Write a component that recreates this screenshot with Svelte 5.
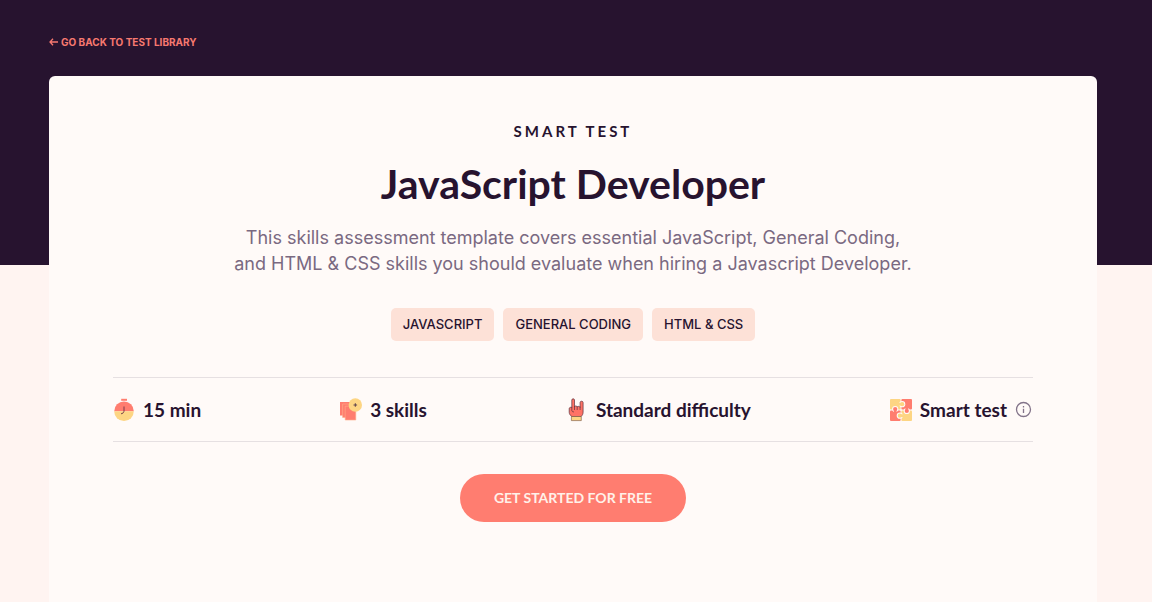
<script lang="ts">
	type Stat = { icon: string; label: string; info?: boolean };

	const tags = ['JavaScript', 'General Coding', 'HTML & CSS'];

	const stats: Stat[] = [
		{ icon: 'timer', label: '15 min' },
		{ icon: 'skills', label: '3 skills' },
		{ icon: 'hand', label: 'Standard difficulty' },
		{ icon: 'puzzle', label: 'Smart test', info: true }
	];
</script>

{#snippet statIcon(name: string)}
	<svg class="stat-icon" viewBox="0 0 22 24" aria-hidden="true">
		{#if name === 'timer'}
			<rect x="8.2" y="0.8" width="5.8" height="2" fill="#ff7d6f" />
			<path d="M1.2 13.3a9.8 9.8 0 0 1 19.6 0z" fill="#ff7d6f" />
			<path d="M1.2 13.3a9.8 9.8 0 0 0 19.6 0z" fill="#fdd583" />
			<path d="M11 8.5v4.8l-1.2 2-1.8.5" fill="none" stroke="#6b3445" stroke-width="0.9" />
		{:else if name === 'skills'}
			<path d="M0 4h11v13.5H0z" fill="#ff7d6f" />
			<path d="M2.6 6h11v13.5h-11z" fill="#ff7d6f" stroke="#ffb08c" stroke-width="0.6" />
			<path d="M5.2 8.2h10.6V22H5.2z" fill="#ff7d6f" stroke="#ffb08c" stroke-width="0.6" />
			<circle cx="15.3" cy="7" r="6.7" fill="#fdd583" />
			<path d="M15.3 5.2v3.6M13.5 7h3.6" stroke="#4f3547" stroke-width="0.9" />
		{:else if name === 'hand'}
			<path
				d="M5.8 18.5c-1.4-1-2.6-2.4-2.6-4.2v-3.6c0-1.2 1.2-1.7 2.6-1.3V2c0-1.6 2.7-1.6 2.7 0v6.6c.7-1 2.4-.8 2.7.3.8-.9 2.3-.6 2.9.4V4.5c0-1.7 3-1.7 3 0v9.7c0 1.8-.8 3.2-2 4.3z"
				fill="#ff7265"
				stroke="#59303d"
				stroke-width="0.7"
				stroke-linejoin="round"
			/>
			<path
				d="M8.5 8.5v3.1M11.2 8.8v2.8M14.1 9v2.6M5.8 9.3v3.2c0 1 1 1.4 1.8 1.4"
				fill="none"
				stroke="#59303d"
				stroke-width="0.7"
				stroke-linecap="round"
			/>
			<path d="M5.4 18.5h9.9v4.1H5.4z" fill="#fdd583" stroke="#75503f" stroke-width="0.6" />
		{:else}
			<rect x="0" y="1" width="10.6" height="10.6" rx="1" fill="#fdd583" />
			<rect x="11.4" y="1" width="10.6" height="10.6" rx="1" fill="#ff7d6f" />
			<rect x="0" y="12.4" width="10.6" height="10.6" rx="1" fill="#ff7d6f" />
			<rect x="11.4" y="12.4" width="10.6" height="10.6" rx="1" fill="#fdd583" />
			<g fill="#fffaf8">
				<circle cx="12.2" cy="6.2" r="3.1" />
				<circle cx="16.8" cy="13" r="3.1" />
				<circle cx="9.8" cy="17.7" r="3.1" />
				<circle cx="5.2" cy="11" r="3.1" />
			</g>
			<path d="M9 4.8h3v2.8H9z" fill="#fdd583" />
			<circle cx="12.2" cy="6.2" r="2.1" fill="#fdd583" />
			<path d="M15.4 9.8h2.8v3h-2.8z" fill="#ff7d6f" />
			<circle cx="16.8" cy="13" r="2.1" fill="#ff7d6f" />
			<path d="M10 16.3h3v2.8h-3z" fill="#fdd583" />
			<circle cx="9.8" cy="17.7" r="2.1" fill="#fdd583" />
			<path d="M3.8 11.2h2.8v3H3.8z" fill="#ff7d6f" />
			<circle cx="5.2" cy="11" r="2.1" fill="#ff7d6f" />
		{/if}
	</svg>
{/snippet}

<main class="page">
	<nav class="back">
		<a href="#library" class="back-link">
			<svg class="back-arrow" viewBox="0 0 9 8" aria-hidden="true">
				<path d="M4 .8L1 4l3 3.2M1 4h8" />
			</svg>
			Go back to test library
		</a>
	</nav>

	<section class="card">
		<p class="eyebrow">Smart test</p>
		<h1 class="title">JavaScript Developer</h1>
		<p class="description">
			This skills assessment template covers essential JavaScript, General Coding, and HTML &amp; CSS
			skills you should evaluate when hiring a Javascript Developer.
		</p>

		<ul class="tags">
			{#each tags as tag}
				<li class="tag">{tag}</li>
			{/each}
		</ul>

		<ul class="stats">
			{#each stats as stat}
				<li class="stat">
					{@render statIcon(stat.icon)}
					<span>{stat.label}</span>
					{#if stat.info}
						<button class="info" type="button" aria-label="About smart tests">
							<svg viewBox="0 0 18 18" aria-hidden="true">
								<circle cx="8.5" cy="8.5" r="7" />
								<path d="M8.5 7.8V12M8.5 4.9v1.5" />
							</svg>
						</button>
					{/if}
				</li>
			{/each}
		</ul>

		<a href="#signup" class="cta">Get started for free</a>
	</section>
</main>

<style>
	:global(body) {
		margin: 0;
	}

	.page {
		box-sizing: border-box;
		display: flex;
		flex-direction: column;
		min-height: 100vh;
		padding: 32px 55px 0 49px;
		background: linear-gradient(#27132f 265px, #fff4f1 265px);
		color: #27132f;
		font-family: Inter, sans-serif;
	}

	.back {
		display: flex;
		margin-bottom: 24px;
	}

	.back-link {
		display: flex;
		align-items: center;
		gap: 3px;
		color: #f77970;
		font-size: 10px;
		font-weight: 700;
		line-height: 20px;
		text-decoration: none;
		text-transform: uppercase;
	}

	.back-arrow {
		width: 9px;
		height: 8px;
		fill: none;
		stroke: currentColor;
		stroke-width: 1.3;
	}

	.card {
		box-sizing: border-box;
		display: flex;
		flex: 1;
		flex-direction: column;
		align-items: center;
		padding: 43px 64px 80px;
		border-radius: 6px 6px 0 0;
		background: #fffaf8;
	}

	.eyebrow {
		margin: 0;
		font-family: Lato, sans-serif;
		font-size: 15px;
		font-weight: 700;
		line-height: 24px;
		letter-spacing: 3px;
		text-transform: uppercase;
	}

	.title {
		margin: 16px 0;
		font-family: Lato, sans-serif;
		font-size: 41px;
		font-weight: 700;
		line-height: 50px;
		text-align: center;
	}

	.description {
		max-width: 686px;
		margin: 0;
		color: #7a6981;
		font-size: 18px;
		line-height: 26px;
		text-align: center;
	}

	.tags {
		display: flex;
		flex-wrap: wrap;
		justify-content: center;
		gap: 9px;
		margin: 31px 0 36px;
		padding: 0;
		list-style: none;
	}

	.tag {
		padding: 0 12px;
		border-radius: 5px;
		background: #fde1d7;
		font-size: 13px;
		font-weight: 500;
		line-height: 33px;
		text-transform: uppercase;
	}

	.stats {
		display: flex;
		flex-wrap: wrap;
		align-self: stretch;
		justify-content: space-between;
		margin: 0 0 32px;
		padding: 0;
		border-top: 1px solid #e6e0e2;
		border-bottom: 1px solid #e6e0e2;
		font-family: Lato, sans-serif;
		font-size: 19px;
		font-weight: 700;
		line-height: 63px;
		list-style: none;
	}

	.stat {
		display: flex;
		align-items: center;
		gap: 8px;
	}

	.stat-icon {
		width: 22px;
		height: 24px;
	}

	.info {
		display: flex;
		padding: 0;
		border: 0;
		background: none;
		cursor: pointer;
	}

	.info svg {
		width: 18px;
		height: 18px;
		fill: none;
		stroke: #83748a;
		stroke-width: 1.3;
	}

	.cta {
		padding: 0 34px;
		border-radius: 24px;
		background: #ff7d70;
		color: #fff1e9;
		font-family: Lato, sans-serif;
		font-size: 14px;
		font-weight: 700;
		line-height: 48px;
		text-decoration: none;
		text-transform: uppercase;
	}
</style>
